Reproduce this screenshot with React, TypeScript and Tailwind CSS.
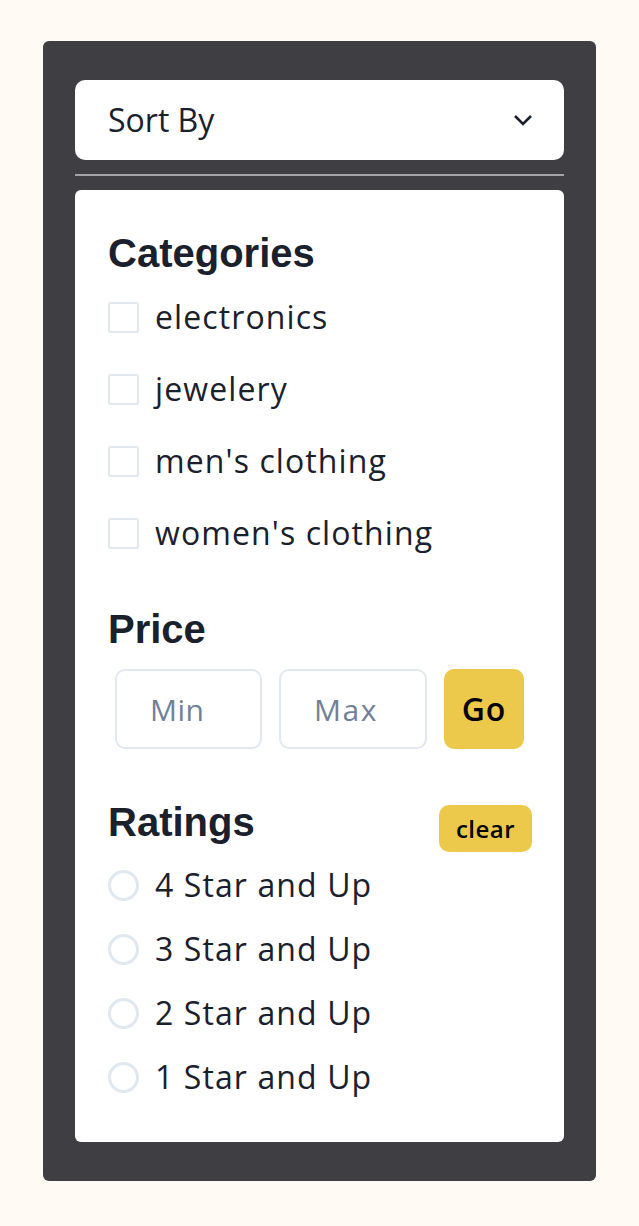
const categories = ["electronics", "jewelery", "men's clothing", "women's clothing"]
const ratings = [4, 3, 2, 1]

const body = { fontFamily: '"Open Sans", "Noto Sans", sans-serif' }
const head = { fontFamily: '"Liberation Sans", Arial, sans-serif' }

const App = () => {
  return (
    <div className="min-h-screen bg-[#fffaf4] pt-[41px] px-[43px] pb-[46px]" style={body}>
      <div className="w-[553px] bg-[#3f3e43] rounded-md px-8 pt-[39px] pb-[39px]">
        <button className="w-full h-20 bg-white rounded-[10px] flex items-center justify-between pl-[33px] pr-[31px] text-[#1a202c]">
          <span className="text-[32px] leading-none">Sort By</span>
          <svg width="20" height="13" viewBox="0 0 20 13" fill="none">
            <path d="M2 2l8 8 8-8" stroke="#1a202c" strokeWidth="2.6" />
          </svg>
        </button>
        <div className="mt-[14px] h-[2px] bg-[#a3a3a8]" />
        <div className="mt-[14px] bg-white rounded-md pl-[33px] pr-8 pt-[43px] pb-[33px] text-[#1a202c]">
          <h2 className="text-[40px] leading-none font-bold" style={head}>Categories</h2>
          <div className="mt-2 flex flex-col">
            {categories.map((c) => (
              <label key={c} className="h-[72px] flex items-center gap-[16px]">
                <span className="w-[31px] h-[31px] rounded-[3px] border-2 border-[#e2e8f0] bg-white" />
                <span className="text-[32px] leading-none tracking-[1.1px]">{c}</span>
              </label>
            ))}
          </div>
          <h2 className="mt-10 text-[40px] leading-none font-bold" style={head}>Price</h2>
          <div className="mt-5 pl-[7px] flex gap-[17px]">
            <div className="w-[147px] h-20 rounded-[10px] border-2 border-[#e2e8f0] flex items-center pl-[33px] text-[30px] tracking-[0.5px] text-[#718096]">Min</div>
            <div className="w-[148px] h-20 rounded-[10px] border-2 border-[#e2e8f0] flex items-center pl-[33px] text-[30px] tracking-[1.5px] text-[#718096]">Max</div>
            <button className="w-20 h-20 rounded-[10px] bg-[#ecc94b] text-[32px] font-semibold tracking-[1px] text-black">Go</button>
          </div>
          <div className="mt-[53px] flex justify-between items-start">
            <h2 className="text-[40px] leading-none font-bold" style={head}>Ratings</h2>
            <button className="mt-[3px] w-[93px] h-[47px] rounded-[10px] bg-[#ecc94b] text-[24px] font-semibold tracking-[0.5px] text-black">clear</button>
          </div>
          <div className="mt-px flex flex-col">
            {ratings.map((r) => (
              <label key={r} className="h-16 flex items-center gap-[16px]">
                <span className="w-[31px] h-[31px] rounded-full border-[3px] border-[#e2e8f0] bg-white" />
                <span className="text-[32px] leading-none tracking-[1.1px]">{r} Star and Up</span>
              </label>
            ))}
          </div>
        </div>
      </div>
    </div>
  )
}

export default App
